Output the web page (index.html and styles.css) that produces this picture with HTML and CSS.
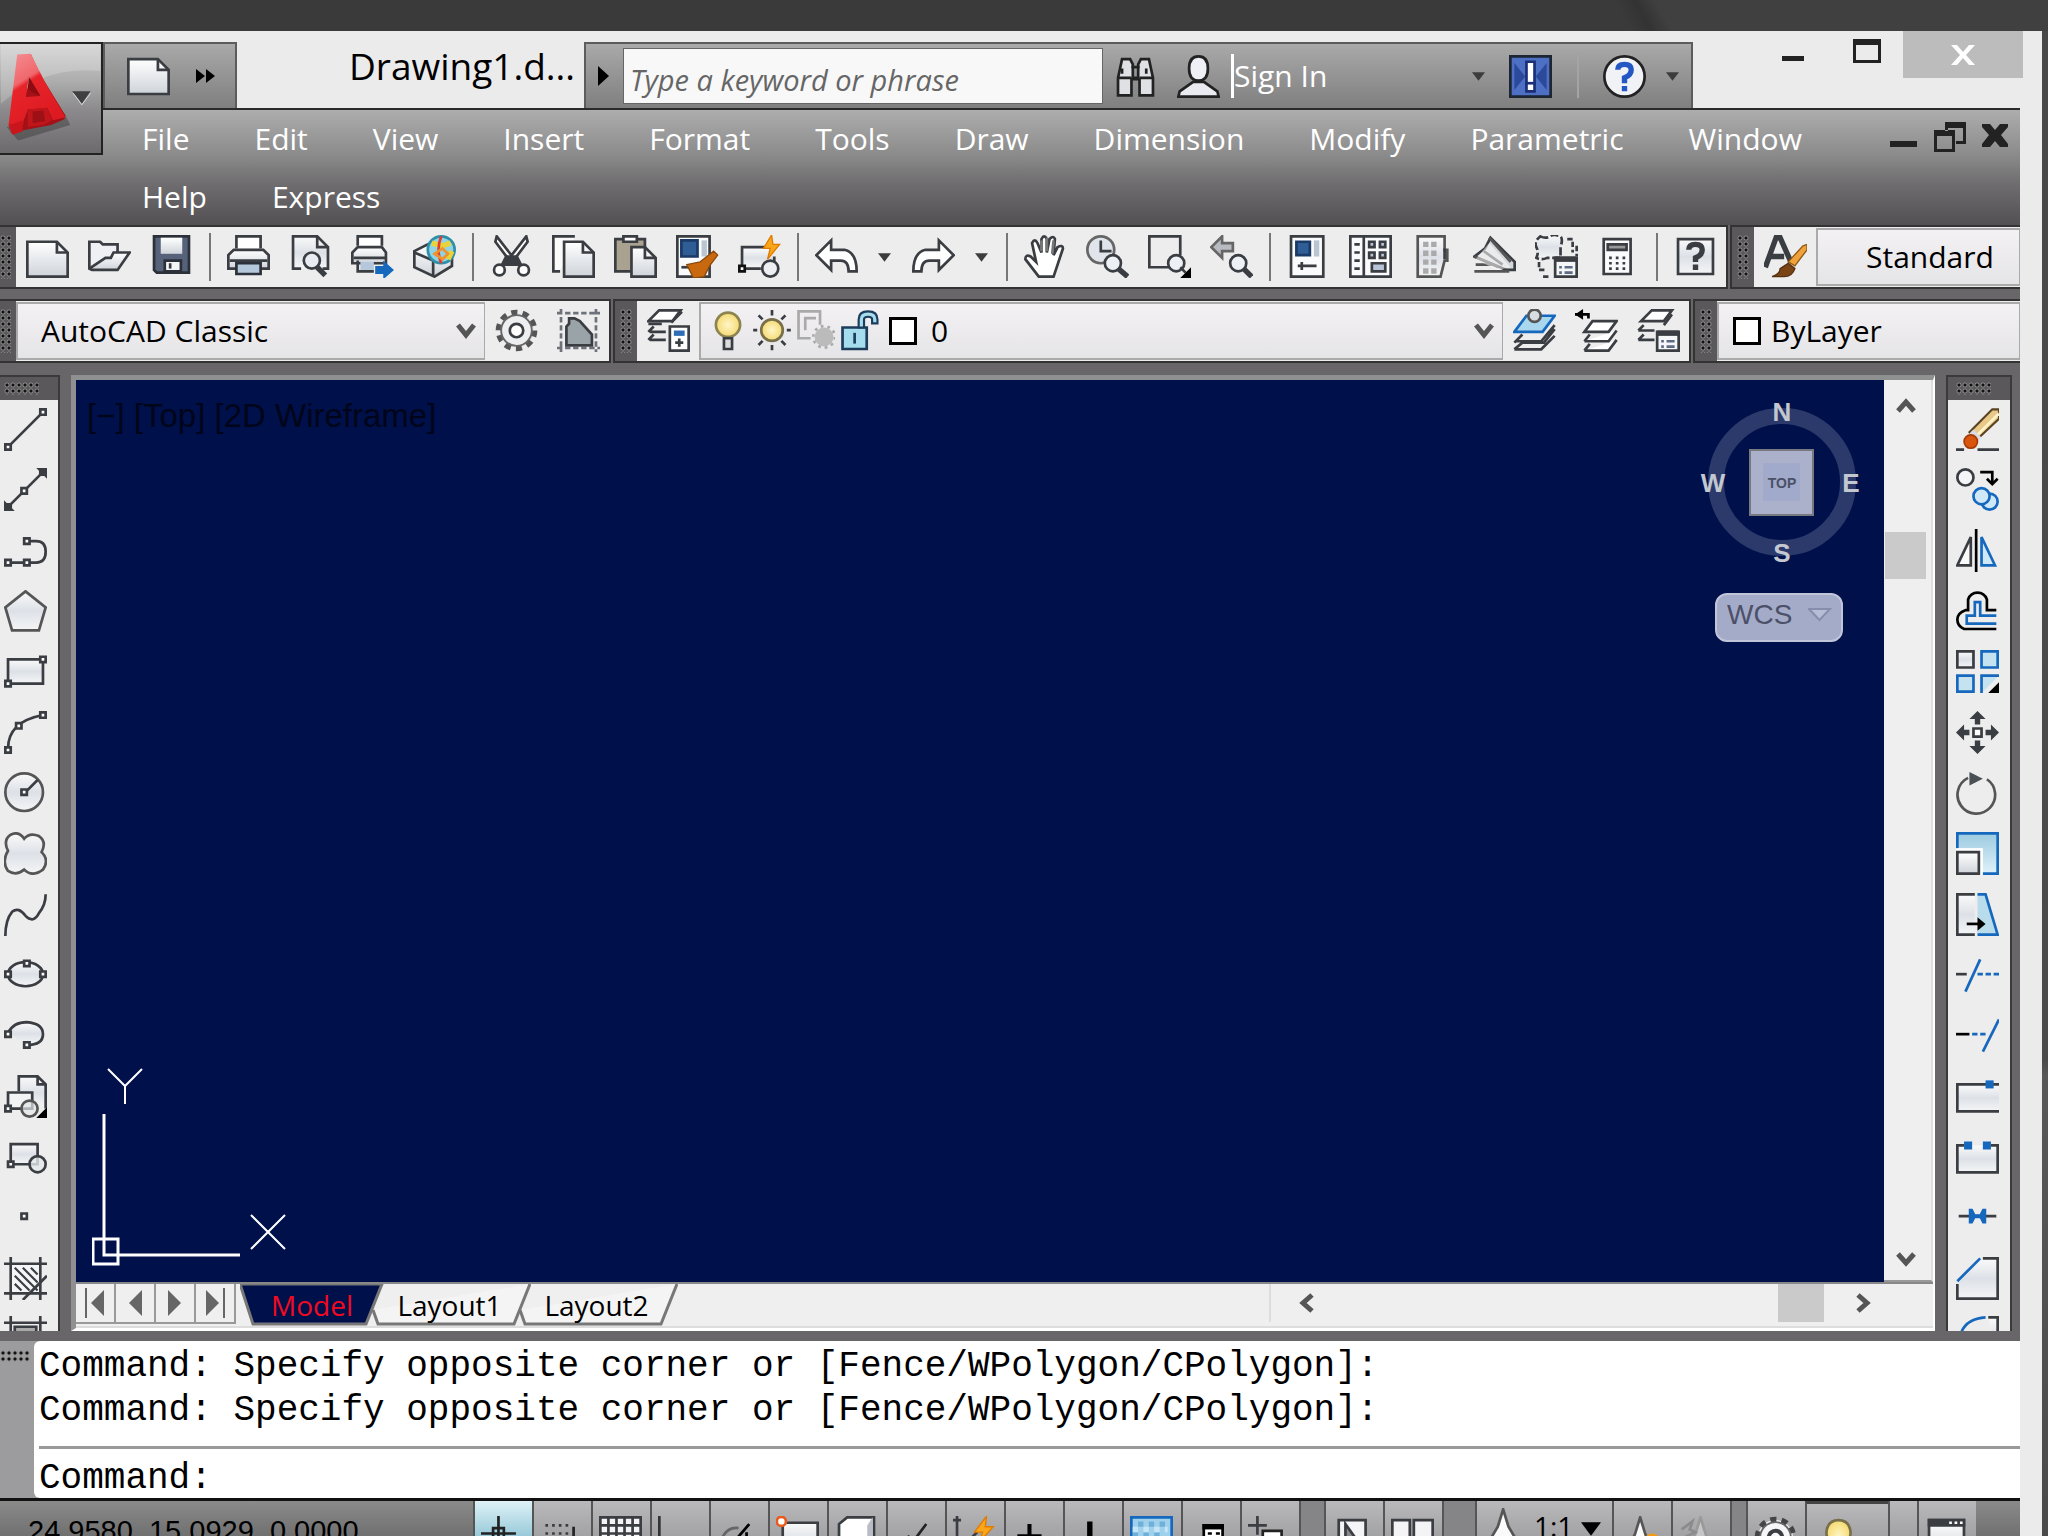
FILE: index.html
```html
<!DOCTYPE html>
<html lang="en">
<head>
  <meta charset="UTF-8">
  <meta name="viewport" content="width=device-width, initial-scale=1.0">
  <title>Drawing1.dwg</title>
  <link rel="stylesheet" href="styles.css">
</head>
<body>

  <!-- Shared gradients -->
  <svg class="defs" aria-hidden="true">
    <defs>
      <linearGradient id="paper" x1="0" y1="0" x2="0" y2="1"><stop offset="0" stop-color="#fff"/><stop offset="1" stop-color="#cfd4da"/></linearGradient>
      <linearGradient id="shade" x1="0" y1="0" x2="0" y2="1"><stop offset="0" stop-color="#fafafa"/><stop offset=".5" stop-color="#dde1e7"/><stop offset="1" stop-color="#f4f5f6"/></linearGradient>
      <linearGradient id="sky" x1="0" y1="0" x2="0" y2="1"><stop offset="0" stop-color="#9ccbe0"/><stop offset="1" stop-color="#dff1fa"/></linearGradient>
      <linearGradient id="red" x1="0" y1="0" x2=".5" y2="1"><stop offset="0" stop-color="#f58f93"/><stop offset=".4" stop-color="#f0686d"/><stop offset=".46" stop-color="#e8242b"/><stop offset="1" stop-color="#dd1a21"/></linearGradient>
      <radialGradient id="bulb"><stop offset="0" stop-color="#fff6c8"/><stop offset="1" stop-color="#f5da72"/></radialGradient>
    </defs>
  </svg>

  <div class="desktop"></div>

  <div class="window">

    <header class="header">
      <button class="logo" aria-label="Application menu">
        <svg viewBox="0 0 103 113">
          <path d="M0 0h103v28Q45 22 0 62z" fill="#fff" opacity=".2"/>
          <path d="M6 86L18 100 72 84 66 72z" fill="#333" opacity=".4"/>
          <path d="M31 10L40 30 67 74 66 78 52 84 10 92 30 40z" fill="#a31016"/>
          <path d="M17 11L31 10 46 40 67 76 54 79 48 66 28 68 22 84 8 84z M29 34L26 55 41 54z" fill="url(#red)" fill-rule="evenodd"/>
          <path d="M29 34L41 54 33 50 28 46z" fill="#8d0c12"/>
          <path d="M28 68L48 66 53 79 44 84 28 86z" fill="#c0151b"/>
          <path d="M33 70L44 69 46 80 33 82z" fill="#9c1016"/>
          <path d="M8 84L24 79 22 91 12 94z" fill="#c9161c"/>
          <path d="M74 49h19l-9 13z" fill="#3f3f42"/>
          <path d="M75 51l9 12 9-12" fill="none" stroke="#ddd"/>
        </svg>
      </button>

      <div class="titlebar">
        <div class="quick">
          <button aria-label="New"><svg class="ic" viewBox="0 0 16 16"><path d="M.5 1.500h11l4 4v9h-15z" fill="url(#paper)"/><path d="M11.500 1.500v4h4"/></svg></button>
          <button aria-label="More"><svg class="more" viewBox="0 0 20 16"><path d="M0 1v14l9-7zM10 1v14l9-7z"/></svg></button>
        </div>
        <h1>Drawing1.d...</h1>
        <div class="info">
          <button class="play" aria-label="Collapse"><svg viewBox="0 0 12 20"><path d="M0 0v20l11-10z"/></svg></button>
          <input class="search" type="search" aria-label="Search" placeholder="Type a keyword or phrase">
          <button aria-label="Find"><svg class="ic" viewBox="0 0 16 16"><path d="M3 1.500h3l1 2v5h2v-5l1-2h3l1.500 7v6.500h-5v-6h-3v6h-5v-6.500z" fill="#dfe1e5" stroke="#222"/><path d="M1.500 8.500h5M9.500 8.500h5M6.500 4.500h3M3 5v2M12 5v2" stroke="#222"/></svg></button>
          <button class="sign" aria-label="Sign In">
            <svg class="ic" viewBox="0 0 16 16"><path d="M8 .5c2.500 0 3.500 2 3.500 4.500s-1 4.500-3.500 4.500-3.500-2-3.500-4.500 1-4.500 3.500-4.500z" fill="#eef0f5" stroke="#222"/><path d="M6 10l-5 3.500-.5 2h15l-.5-2-5-3.500z" fill="#e9ebf0" stroke="#222"/></svg>
            <span>Sign In</span>
            <svg class="tri" viewBox="0 0 12 8"><path d="M0 0h12l-6 8z"/></svg>
          </button>
          <button aria-label="Exchange"><svg class="ic" viewBox="0 0 16 16"><path d="M.5 .5h15v15h-15z" fill="#4d6fc4" stroke="#1d2432"/><path d="M2 3l4 5-4 5M14 3l-4 5 4 5" fill="#2c4a9a" stroke="none"/><path d="M6.500 2.500h3v11h-3z" fill="#fff" stroke="#1b2f78"/><path d="M6 10.500h4" stroke="#1b2f78"/></svg></button>
          <i class="rule"></i>
          <button aria-label="Help"><svg class="ic" viewBox="0 0 16 16"><circle cx="8" cy="8" r="7.500" fill="#f0f2f5" stroke="#222"/><path d="M5.500 5.500q0-2 2.500-2t2.500 2-2.500 3v2M8 11.500v2" stroke="#2456c4" stroke-width="2"/></svg></button>
          <button class="drop" aria-label="Help options"><svg class="tri" viewBox="0 0 12 8"><path d="M0 0h12l-6 8z"/></svg></button>
        </div>
        <div class="winbtns">
          <button aria-label="Minimize"><svg viewBox="0 0 28 24"><path d="M3 17h22v5h-22z"/></svg></button>
          <button aria-label="Maximize"><svg viewBox="0 0 28 24"><path d="M0 0h28v24h-28zM3 6v15h22v-15z" fill-rule="evenodd"/></svg></button>
          <button class="close" aria-label="Close"><svg viewBox="0 0 24 20"><path d="M0 0h6l6 7 6-7h6l-9 10 9 10h-6l-6-7-6 7h-6l9-10z"/></svg></button>
        </div>
      </div>

      <div class="menubar">
        <nav class="menu">
          <button>File</button>
          <button>Edit</button>
          <button>View</button>
          <button>Insert</button>
          <button>Format</button>
          <button>Tools</button>
          <button>Draw</button>
          <button>Dimension</button>
          <button>Modify</button>
          <button>Parametric</button>
          <button>Window</button>
          <button>Help</button>
          <button>Express</button>
        </nav>
        <div class="docbtns">
          <button aria-label="Minimize drawing"><svg viewBox="0 0 28 30"><path d="M0 19h27v6h-27z"/></svg></button>
          <button aria-label="Restore drawing"><svg viewBox="0 0 32 30"><path d="M11 0h21v22h-10v-3h7v-13h-15v3h-3zM0 8h21v22h-21zM3 14v13h15v-13z" fill-rule="evenodd"/></svg></button>
          <button aria-label="Close drawing"><svg viewBox="0 0 26 30"><path d="M0 2h8l5 6 5-6h8v3l-7 8 7 9v3h-8l-5-6-5 6h-8v-3l7-9-7-8z"/></svg></button>
        </div>
      </div>
    </header>

    <main class="main">
      <div class="toolrow">
        <section class="bar">
          <i class="grip"></i>
          <button class="tool" aria-label="New"><svg class="ic" viewBox="0 0 16 16"><path d="M.5 2.500h11l4 4v9h-15z" fill="url(#paper)"/><path d="M11.500 2.500v4h4"/></svg></button>
          <button class="tool" aria-label="Open"><svg class="ic" viewBox="0 0 16 16"><path d="M.5 12.500v-10h4l1 1h5.500v4" fill="#eef0f3"/><path d="M.5 12.500l6-4h2l1-2h6l-4.500 6.500h-9.500z" fill="url(#paper)"/></svg></button>
          <button class="tool" aria-label="Save"><svg class="ic" viewBox="0 0 16 16"><path d="M1.500 .5h13v13.500h-12l-1-1z" fill="#56617a" stroke="#2c3038"/><path d="M4 1h8v6h-8z" fill="url(#paper)" stroke="none"/><path d="M5.500 9.500h6v4h-6z" fill="#f4f5f7" stroke="#2c3038"/><path d="M7.500 10.500v2"/></svg></button>
          <i class="sep"></i>
          <button class="tool" aria-label="Plot"><svg class="ic" viewBox="0 0 16 16"><path d="M3.500 5v-4.500h9v4.500" fill="#fff"/><path d="M.5 12.500v-5l2-2h11l2 2v5z" fill="url(#paper)"/><path d="M1 9.500h14"/><path d="M3.500 10.500h9v4h-9z" fill="#b5c8db" stroke="#2c3038"/></svg></button>
          <button class="tool" aria-label="Preview"><svg class="ic" viewBox="0 0 16 16"><path d="M4.500 12.500h-3v-12h9l4 4v8h-2" fill="url(#shade)"/><path d="M10.500 .5v4h4"/><circle cx="8.500" cy="9.500" r="3" fill="#e8edf3"/><path d="M10.500 12l3 3" stroke-width="2"/></svg></button>
          <button class="tool" aria-label="Publish"><svg class="ic" viewBox="0 0 16 16"><path d="M2.500 4v-3.500h9v3.500" fill="#fff"/><path d="M.5 10.500v-4l2-2h9l1.500 2v4z" fill="url(#paper)"/><path d="M1 8.500h12M2.500 9.500v4h6"/><path d="M3.500 10h5v3h-5z" fill="#b5c8db" stroke="none"/><path d="M9 11.500h3v-2l4 3.500-4 3.500v-2h-3z" fill="#1668bd" stroke="none"/></svg></button>
          <button class="tool" aria-label="3D DWF"><svg class="ic" viewBox="0 0 16 16"><path d="M.5 6l5-2.500h9v8l-6.500 4-7.500-3.500z" fill="url(#paper)"/><path d="M.5 6.500l7 3v6"/><circle cx="10.500" cy="5.500" r="5" fill="#8fd3e6" stroke="#2f8fa8"/><path d="M7 3l4 1 3-1M13 9l1.500-3" stroke="#e9d33c" stroke-width="2"/><path d="M10.500 .5q-2 5 0 10" stroke="#e23c2c"/><path d="M8 7l3-2 2 2-2 2z" stroke="#f0932b"/></svg></button>
          <i class="sep"></i>
          <button class="tool" aria-label="Cut"><svg class="ic" viewBox="0 0 16 16"><path d="M2.500 .5l7 9-1.500 1-6-8zM13.500 .5l-7 9 1.500 1 6-8z" fill="#fff"/><path d="M6 8h4l1.500 3h-7z" fill="#3a3d42"/><circle cx="3.500" cy="13" r="2" fill="#fff"/><circle cx="12.500" cy="13" r="2" fill="#fff"/></svg></button>
          <button class="tool" aria-label="Copy"><svg class="ic" viewBox="0 0 16 16"><path d="M3 13.500h-2.500v-13h8" fill="#fafafa"/><path d="M4.500 2.500h7l4 4v9h-11z" fill="url(#paper)"/><path d="M11.500 2.500v4h4"/></svg></button>
          <button class="tool" aria-label="Paste"><svg class="ic" viewBox="0 0 16 16"><path d="M.5 1.500h11v12h-11z" fill="#aaa291"/><path d="M3.500 2.500v-2h5v2z" fill="#fff"/><path d="M6.500 4.500h5l4 4v7h-9z" fill="url(#paper)"/><path d="M11.500 4.500v4h4"/></svg></button>
          <button class="tool" aria-label="Match properties"><svg class="ic" viewBox="0 0 16 16"><path d="M.5 .5h12v15h-12z" fill="#fafbfc"/><path d="M2 2h6v6h-6z" fill="#2f5d96" stroke="#1b3a66"/><path d="M9.500 2h2v6h-2z" fill="#b9c6d2" stroke="none"/><path d="M2 12h4"/><path d="M4 11l5-1 5-4 1.500 1.500-3 4-2 4-4 .5z" fill="#c8690f" stroke="#8d4a0c" stroke-width=".5"/></svg></button>
          <button class="tool" aria-label="Block editor"><svg class="ic" viewBox="0 0 16 16"><path d="M2 5h11v7h-11z" fill="url(#shade)" stroke="none"/><path d="M1.500 4.500v8h7M1 4.500h9M13.500 8v2"/><path d="M.5 11.500h2v2h-2z" fill="#fff" stroke="#111"/><circle cx="12" cy="12.500" r="3" fill="#eceef1"/><path d="M12.500 0l-3 5h2.500l-1 4 4.500-5.500h-2.500z" fill="#f9a61a" stroke="#e07c00" stroke-width=".5"/></svg></button>
          <i class="sep"></i>
          <button class="tool" aria-label="Undo"><svg class="ic" viewBox="0 0 16 16"><path d="M.5 7.500l5.500-5.500v3.500h5q4.500 1 4.500 8h-3q0-4-3-4h-3.500v3.500z" fill="#fff"/></svg></button>
          <button class="mini" aria-label="Undo list"><svg class="tri" viewBox="0 0 12 8"><path d="M0 0h12l-6 8z"/></svg></button>
          <button class="tool" aria-label="Redo"><svg class="ic" viewBox="0 0 16 16"><path d="M15.500 7.500l-5.500-5.500v3.500h-5q-4.500 1-4.500 8h3q0-4 3-4h3.500v3.500z" fill="#fff"/></svg></button>
          <button class="mini" aria-label="Redo list"><svg class="tri" viewBox="0 0 12 8"><path d="M0 0h12l-6 8z"/></svg></button>
          <i class="sep"></i>
          <button class="tool" aria-label="Pan"><svg class="ic" viewBox="0 0 16 16"><path d="M5.500 15.500l-5-6.500q0-2 2-1l2 2-1.500-7q1-2 2 0l1.500 3.500v-5q1-2 2 0v5l1-5q1.500-1.500 2 0l-.5 6 1.500-3q2-1 2 .5l-2 6-1.500 4.500z" fill="#fff"/><path d="M6.500 6v-4M8.500 6v-5M10.500 7l.5-5" stroke="#777"/></svg></button>
          <button class="tool" aria-label="Zoom realtime"><svg class="ic" viewBox="0 0 16 16"><circle cx="5.500" cy="5.500" r="5" fill="#dfe5eb" stroke="#666"/><path d="M5.500 2v4h4"/><circle cx="10" cy="10.500" r="3" fill="#eef1f4"/><path d="M12 12.500l3.500 3" stroke-width="2"/></svg></button>
          <button class="tool" aria-label="Zoom window"><svg class="ic" viewBox="0 0 16 16"><path d="M8 12h-7.500v-11.500h11.500v7"/><circle cx="10.500" cy="10.500" r="3" fill="#eef1f4"/><path d="M12 12l2 2"/><path d="M16 12v4h-4z" fill="#000" stroke="none"/></svg></button>
          <button class="tool" aria-label="Zoom previous"><svg class="ic" viewBox="0 0 16 16"><path d="M.5 4.500l4-4v2.500h4v3h-4v2.500z" fill="#b8bcc2" stroke="#666"/><circle cx="10.500" cy="10.500" r="3" fill="#eef1f4"/><path d="M12.500 12.500l3 3" stroke-width="2"/></svg></button>
          <i class="sep"></i>
          <button class="tool" aria-label="Properties"><svg class="ic" viewBox="0 0 16 16"><path d="M1.500 .5h12v15h-12z" fill="#fafbfc"/><path d="M3.500 2.500h5v5h-5z" fill="#2f5d96" stroke="#1b3a66"/><path d="M10 2h2v6h-2z" fill="#b9c6d2" stroke="none"/><path d="M4 11.500h7M5.500 10v3"/></svg></button>
          <button class="tool" aria-label="DesignCenter"><svg class="ic" viewBox="0 0 16 16"><path d="M.5 .5h15v15h-15zM5.500 1v14" fill="#fafbfc"/><path d="M2 3.500h2M2 6.500h2M2 9.500h2M2 12.500h2"/><path d="M7.500 2.500h2v2h-2zM11.500 2.500h2v2h-2zM7.500 6.500h2v2h-2zM11.500 6.500h2v2h-2zM8.500 10.500h5v3h-5z" fill="#b9c3d8"/></svg></button>
          <button class="tool" aria-label="Tool palettes"><svg class="ic" viewBox="0 0 16 16"><path d="M2.500 .5h10v5h1v4h-1l-1.500 6h-8.500z" fill="url(#shade)" stroke="#555"/><path d="M12.500 5v4"/><path d="M5.500 2.500v13M8.500 2.500v13" stroke="#aaa" stroke-width="2" stroke-dasharray="2 1.300"/></svg></button>
          <button class="tool" aria-label="Sheet sets"><svg class="ic" viewBox="0 0 16 16"><path d="M.5 8l4-3 2-4 9 9v3h-3z" fill="#d4d7db"/><path d="M6 1l8 9M.5 8l9 4M1 11h7M.5 13.500h13M4 6l7 5" stroke="#555"/><path d="M1 9l8 4 5-1-8-9z" fill="#fff" opacity=".5" stroke="none"/></svg></button>
          <button class="tool" aria-label="Markup"><svg class="ic" viewBox="0 0 16 16"><path d="M2 .5q2 1 3.500 0t4 0q1 1 0 4v4h-5q-2 1-4 0 1-2 0-4t1.500-4z" fill="url(#shade)" stroke-dasharray="3 1"/><path d="M12 1.500h2v5M15.500 4v4M1.500 10v3h3M3 15.500h2" stroke-dasharray="2 1"/><path d="M7.500 8.500h8v7h-8z" fill="#f4f6f8"/><path d="M7.500 9h8" stroke-width="2"/><path d="M9 12h1M11 12h3M9 14h1M11 14h3" stroke="#5d6b85"/></svg></button>
          <button class="tool" aria-label="QuickCalc"><svg class="ic" viewBox="0 0 16 16"><path d="M2.500 1.500h10v13h-10z" fill="#fafbfc"/><path d="M4 3.500h7v2h-7z" fill="#999"/><path d="M5 8v6M7.500 8v6M10 8v6" stroke-dasharray="1 1"/></svg></button>
          <i class="sep"></i>
          <button class="tool" aria-label="Help"><svg class="ic" viewBox="0 0 16 16"><path d="M1.500 1.500h13v13h-13z" fill="url(#shade)"/><path d="M5.500 5.500q0-2 2.500-2t2.500 2-2.500 3v1.500M8 11v2" stroke-width="2"/></svg></button>
        </section>
        <section class="bar grow">
          <i class="grip"></i>
          <button class="tool" aria-label="Text style"><svg class="ic" viewBox="0 0 16 16"><path d="M.5 12l4-11h1.500l4 9M2.500 8h5" stroke-width="2"/><path d="M9 10l5.500-6 1.500-.5v2l-4.500 6z" fill="#f0a13c" stroke="#8d5a14" stroke-width=".5"/><path d="M3 15.500q3-1 3-3l3-2 2.500 2q-1 3-4 3z" fill="#7a4415" stroke="#54300f" stroke-width=".5"/></svg></button>
          <label class="combo grow indent"><select aria-label="Text style name"><option>Standard</option></select></label>
        </section>
      </div>

      <div class="toolrow">
        <section class="bar">
          <i class="grip"></i>
          <label class="combo workspace"><select aria-label="Workspace"><option>AutoCAD Classic</option></select><svg class="chev" viewBox="0 0 20 16"><path d="M2 2l8 10 8-10"/></svg></label>
          <button class="tool" aria-label="Workspace settings"><svg class="ic" viewBox="0 0 16 16"><circle cx="8" cy="8" r="6.500" fill="#e6e8eb" stroke="#555" stroke-width="2.500" stroke-dasharray="2.200 1.880"/><circle cx="8" cy="8" r="5.700" fill="#eceef0" stroke="#666" stroke-width=".7"/><circle cx="8" cy="8" r="2.500" fill="#fff"/></svg></button>
          <button class="tool" aria-label="My workspace"><svg class="ic" viewBox="0 0 16 16"><path d="M0 1.500h16M1.500 0v16M14.500 0v16M0 14.500h16" stroke="#6d7179" stroke-dasharray="2 1"/><path d="M3.500 13.500v-7l1-1v-2h2l2 1 4.500 5v4z" fill="#9aa3a8"/></svg></button>
        </section>
        <section class="bar grow">
          <i class="grip"></i>
          <button class="tool" aria-label="Layer properties"><svg class="ic" viewBox="0 0 16 16"><path d="M.5 4.500l4-4h8l-3 4z" fill="#fff"/><path d="M.5 5.500h5M1 8.500h6M.5 8.500l2-2M1 11.500h6M.5 11.500l2-2M13 1l-4 4"/><path d="M8.500 6.500h7v9h-7z" fill="#fff"/><path d="M10 8h4v2h-4z" fill="#2f6db6" stroke="none"/><path d="M10.500 12.500h3M12 11v3"/></svg></button>
          <label class="combo grow layer">
            <svg class="ic sm" viewBox="0 0 14 16"><circle cx="7" cy="5.500" r="4.500" fill="url(#bulb)" stroke="#8c8450"/><path d="M5.500 10.500h3v4h-3z" fill="#ddd"/></svg>
            <svg class="ic sm" viewBox="0 0 14 16"><circle cx="7" cy="7.500" r="4" fill="url(#bulb)" stroke="#77704a"/><path d="M7 0v2M7 13v2M0 7.500h1.500M12.500 7.500h1.500M2 2l1.500 1.500M12 2l-1.500 1.500M2 13l1.500-1.500M12 13l-1.500-1.500"/></svg>
            <svg class="ic sm" viewBox="0 0 14 16"><path d="M5 10.500h-4.500v-10h8v5M3 7.500v-4.500h4" stroke="#aaa"/><circle cx="10" cy="10" r="3" fill="#bbb" stroke="#bbb"/><circle cx="10" cy="10" r="4" stroke="#aaa" stroke-dasharray="1 1.500"/></svg>
            <svg class="ic sm" viewBox="0 0 14 16"><path d="M.5 6.500h9v8h-9z" fill="#a5dcee" stroke="#1d3c5c"/><path d="M5 8.500v4" stroke="#1d3c5c"/><path d="M6.500 6.500v-3q0-3 3.500-3t3.500 3v1.500h-2v-1.500q0-1-1.500-1t-1.500 1v3z" fill="#a5dcee" stroke="#1d3c5c" stroke-width=".8"/></svg>
            <i class="swatch"></i>
            <select aria-label="Layer"><option>0</option></select>
            <svg class="chev" viewBox="0 0 20 16"><path d="M2 2l8 10 8-10"/></svg>
          </label>
          <button class="tool" aria-label="Make current"><svg class="ic" viewBox="0 0 16 16"><path d="M.5 15l3-2.500h8l4-5M.5 12.500l3-3M1 12h9.500l5-6M.5 15h10l5-5"/><path d="M.5 8.500l4.500-6h10.500l-4.500 6z" fill="#a9d7ee" stroke="#1668bd"/><circle cx="8" cy="2.500" r="2.300" fill="#d8dde2" stroke="#555"/></svg></button>
          <button class="tool" aria-label="Layer previous"><svg class="ic" viewBox="0 0 16 16"><path d="M3.500 8.500l3-4h9l-3 4zM3.500 12l2-2.500M3.500 12h9l3-4M3.500 15.500l2-2.500M3.500 15.500h9l3-4" fill="#fff"/><path d="M0 2h5v1.500" stroke="#000"/><path d="M3 0v4l-3-2z" fill="#000" stroke="none"/></svg></button>
          <button class="tool" aria-label="Layer states"><svg class="ic" viewBox="0 0 16 16"><path d="M1.500 4.500l4-4h7.500l-3 4z" fill="#fff"/><path d="M.5 8l2-2M.5 8h6M.5 11.500l2-2M.5 11.500h6M13 2l-3 4"/><path d="M7.500 8.500h8v7h-8z" fill="#f4f6f8"/><path d="M7.500 9h8" stroke-width="2"/><path d="M9 12h1M11 12h3M9 14h1M11 14h3" stroke="#5d6b85"/></svg></button>
        </section>
        <section class="bar props">
          <i class="grip"></i>
          <label class="combo grow color"><i class="swatch"></i><select aria-label="Color"><option>ByLayer</option></select></label>
        </section>
      </div>

      <div class="workarea">
        <aside class="side">
          <i class="grip flat"></i>
          <div class="tools">
            <button aria-label="Line"><svg class="ic" viewBox="0 0 16 16"><path d="M2 14l12-12"/><path d="M.5 13.500h2v2h-2zM13.500 .5h2v2h-2z" fill="#fff"/></svg></button>
            <button aria-label="Construction line"><svg class="ic" viewBox="0 0 16 16"><path d="M2 14l12-12"/><path d="M6.500 7.500h2v2h-2z" fill="#fff"/><path d="M12 0h4v4l-1-1h-2v-2zM0 16h4l-1-1v-2h-2l-1-1z" fill="#3a3d42" stroke="none"/></svg></button>
            <button aria-label="Polyline"><svg class="ic" viewBox="0 0 16 16"><path d="M2 12.500h10q3.500 0 3.500-4t-3.500-4h-3"/><path d="M.5 11.500h2v2h-2zM7.500 11.500h2v2h-2zM7.500 3.500h2v2h-2z" fill="#fff"/></svg></button>
            <button aria-label="Polygon"><svg class="ic" viewBox="0 0 16 16"><path d="M8 .5l7.500 6-2.500 8.500h-10l-2.500-8.500z" fill="url(#shade)" stroke="#555"/></svg></button>
            <button aria-label="Rectangle"><svg class="ic" viewBox="0 0 16 16"><path d="M1.500 3.500h13v9h-13z" fill="url(#shade)"/><path d="M.5 11.500h2v2h-2zM13.500 2.500h2v2h-2z" fill="#fff"/></svg></button>
            <button aria-label="Arc"><svg class="ic" viewBox="0 0 16 16"><path d="M1.500 14q0-10 13-12.500"/><path d="M.5 13.500h2v2h-2zM4.500 4.500h2v2h-2zM13.500 .5h2v2h-2z" fill="#fff"/></svg></button>
            <button aria-label="Circle"><svg class="ic" viewBox="0 0 16 16"><circle cx="7.500" cy="7.500" r="7" fill="url(#shade)" stroke="#555"/><path d="M8 7.500l4.500-4.500"/><path d="M6.500 6.500h2v2h-2z" fill="#fff"/></svg></button>
            <button aria-label="Revision cloud"><svg class="ic" viewBox="0 0 16 16"><path d="M1.500 7q-2-4 1-6 3-1.500 5 1.500 2-2.500 5.500-1 3 2 1 6 3 3 .5 6.500-4 3-7 0-3 2.500-6 .5-2.500-3.500 0-7.500z" fill="url(#shade)" stroke="#555"/></svg></button>
            <button aria-label="Spline"><svg class="ic" viewBox="0 0 16 16"><path d="M.5 16q0-6 2.500-9 2.500-2 5 1.500 3 3 5-1 2.500-3 2.500-7"/></svg></button>
            <button aria-label="Ellipse"><svg class="ic" viewBox="0 0 16 16"><ellipse cx="8" cy="7.500" rx="6.500" ry="4.500" fill="url(#shade)"/><path d="M.5 6.500h2v2h-2zM13.500 6.500h2v2h-2zM7.500 2.500h2v2h-2z" fill="#fff"/></svg></button>
            <button aria-label="Ellipse arc"><svg class="ic" viewBox="0 0 16 16"><path d="M1.500 7q2-4 7-4 6 .5 6 4.500t-6 4" fill="url(#shade)"/><path d="M.5 6.500h2v2h-2zM7.500 10.500h2v2h-2z" fill="#fff"/></svg></button>
            <button aria-label="Insert block"><svg class="ic" viewBox="0 0 16 16"><path d="M5.500 6v-5.500h7l3 3v9" fill="url(#shade)"/><path d="M12.500 .5v3h3"/><path d="M1.500 6.500h9v6h-9z" fill="#f2f3f5"/><circle cx="9.500" cy="12.500" r="3" fill="#e4e7ea" fill-opacity=".7" stroke="#555"/><path d="M.5 11.500h2v2h-2z" fill="#fff"/><path d="M16 12v4h-4z" fill="#000" stroke="none"/></svg></button>
            <button aria-label="Make block"><svg class="ic" viewBox="0 0 16 16"><path d="M2.500 3h10v7.500h-10z" fill="url(#shade)"/><circle cx="12.500" cy="10.500" r="3" fill="#e4e7ea" fill-opacity=".8"/><path d="M1.500 9.500h2v2h-2z" fill="#fff"/></svg></button>
            <button aria-label="Point"><svg class="ic" viewBox="0 0 16 16"><path d="M6.500 6.500h2v2h-2z" fill="#fff"/></svg></button>
            <button aria-label="Hatch"><svg class="ic" viewBox="0 0 16 16"><path d="M0 2.500h16M0 13.500h16M2.500 0v16M13.500 0v16"/><path d="M3 3h10v10h-10z" fill="#f4f5f6" stroke="none"/><path d="M4 10l2.500 2.500M4 7l5.500 5.500M4 4l8.500 8.500M7 4l5.500 5.500M10 4l2.500 2.500" stroke-width=".8"/><path d="M7 16l9-9"/></svg></button>
            <button class="cut" aria-label="Gradient"><svg class="ic" viewBox="0 0 16 16"><path d="M0 2.500h16M2.500 0v16M13.500 0v16"/><path d="M4 4h8v8h-8z" fill="#aaa"/></svg></button>
          </div>
        </aside>

        <div class="frame">
          <div class="view">
            <p class="viewlabel">[−] [Top] [2D Wireframe]</p>
            <svg class="cube" viewBox="0 0 170 170">
              <circle cx="85" cy="85" r="66" fill="none" stroke="#2b396b" stroke-width="16"/>
              <path d="M53 53h63v65h-63z" fill="#abb1cb" stroke="#77797f" stroke-width="2"/>
              <path d="M66 66h37v38h-37z" fill="#a2aacb"/>
              <text x="85" y="91" class="top">TOP</text>
              <text x="85" y="24">N</text>
              <text x="85" y="165">S</text>
              <text x="16" y="95">W</text>
              <text x="154" y="95">E</text>
            </svg>
            <button class="wcs">WCS <svg viewBox="0 0 24 14"><path d="M1 1h21l-10.500 11z"/></svg></button>
            <svg class="ucs" viewBox="0 0 200 204">
              <path d="M12 50v141h136M1 175h25v25h-25z"/>
              <path d="M16 5l17 17 17-17M33 22v18M159 151l34 34M193 151l-34 34" stroke-width="2"/>
            </svg>
          </div>
          <div class="vscroll">
            <svg class="chev" viewBox="0 0 20 16"><path d="M2 14l8-9 8 9"/></svg>
            <i class="thumb"></i>
            <svg class="chev" viewBox="0 0 20 16"><path d="M2 2l8 9 8-9"/></svg>
          </div>
          <div class="tabs">
            <button class="nav" aria-label="First"><svg viewBox="0 0 20 30"><path d="M1 0v30" stroke="#666" stroke-width="2"/><path d="M19 2v26l-13-13z"/></svg></button>
            <button class="nav" aria-label="Previous"><svg viewBox="0 0 20 30"><path d="M17 2v26l-13-13z"/></svg></button>
            <button class="nav" aria-label="Next"><svg viewBox="0 0 20 30"><path d="M3 2v26l13-13z"/></svg></button>
            <button class="nav" aria-label="Last"><svg viewBox="0 0 20 30"><path d="M1 2v26l13-13z"/><path d="M19 0v30" stroke="#666" stroke-width="2"/></svg></button>
            <button class="tab model"><svg viewBox="0 0 144 42" preserveAspectRatio="none"><path d="M0 0l13 40h113l16-40z"/></svg><span>Model</span></button>
            <button class="tab"><svg viewBox="0 0 163 42" preserveAspectRatio="none"><path d="M5 26l5 14h136l16-40"/></svg><span>Layout1</span></button>
            <button class="tab"><svg viewBox="0 0 163 42" preserveAspectRatio="none"><path d="M5 26l5 14h136l16-40"/></svg><span>Layout2</span></button>
            <div class="hscroll">
              <svg viewBox="0 0 16 20"><path d="M14 2l-9 8 9 8"/></svg>
              <i class="thumb"></i>
              <svg viewBox="0 0 16 20"><path d="M2 2l9 8-9 8"/></svg>
            </div>
          </div>
        </div>

        <aside class="side right">
          <i class="grip flat"></i>
          <div class="tools">
            <button aria-label="Erase"><svg class="ic" viewBox="0 0 16 16"><path d="M5 9l8.500-8.500h2.500v3.500l-8.500 8z" fill="#e8c98a" stroke="#5a4320" stroke-width=".8"/><path d="M7 11l9-9" stroke="#fff3c8"/><path d="M5 9.500l1.500-1.500 3 3-1.500 1.500z" fill="#d9dde2" stroke="none"/><circle cx="5.500" cy="12.500" r="2.500" fill="#d9560f" stroke="#a33b06" stroke-width=".6"/><path d="M0 15.500h3M8 15.500h8"/></svg></button>
            <button aria-label="Copy object"><svg class="ic" viewBox="0 0 16 16"><circle cx="3.500" cy="3.500" r="3" fill="#f4f5f6"/><path d="M9 1.500h4.500v4M11.500 4l2 2 2-2" stroke="#000"/><g fill="#cfe8f7" stroke="#1668bd"><circle cx="12.500" cy="12.500" r="3"/><circle cx="9.500" cy="10.500" r="3"/></g></svg></button>
            <button aria-label="Mirror"><svg class="ic" viewBox="0 0 16 16"><path d="M5.500 3v10.500h-5z" fill="#fafafa"/><path d="M7.500 0v16" stroke="#000"/><path d="M9.500 3v10.500h5z" fill="#cfe8f7" stroke="#1668bd"/></svg></button>
            <button aria-label="Offset"><svg class="ic" viewBox="0 0 16 16"><path d="M15 14.500h-12q-2.500-1-2.500-3.500t3-3.500h1v-4q1-2.500 3.500-2.500t3.500 2.500v4h3.500" stroke="#000"/><path d="M15 12.500h-11v-3h3v-5h2v5h6" stroke="#1668bd"/></svg></button>
            <button aria-label="Array"><svg class="ic" viewBox="0 0 16 16"><path d="M.5 .5h6v6h-6z" fill="url(#shade)"/><path d="M9.500 .5h6v6h-6zM.5 9.500h6v6h-6zM9.500 16v-6.500h6.500" fill="#c5e2f0" stroke="#1668bd"/><path d="M16 10v6h-6z" fill="#eee" stroke="none"/><path d="M16 12v4h-4z" fill="#000" stroke="none"/></svg></button>
            <button aria-label="Move"><svg class="ic" viewBox="0 0 16 16"><path d="M6.500 6.500h3v3h-3z" fill="#fff"/><path d="M8 0l3 3h-2v2h-2v-2h-2zM8 16l3-3h-2v-2h-2v2h-2zM0 8l3-3v2h2v2h-2v2zM16 8l-3-3v2h-2v2h2v2z" fill="#3a3d42" stroke="none"/></svg></button>
            <button aria-label="Rotate"><svg class="ic" viewBox="0 0 16 16"><path d="M5 2q-4.500 2-4.500 6.500t7 7q7-2 7-7.500 0-3.500-3-5.500" stroke="none"/><path d="M4.500 2.200a7 7 0 1 0 7 .5" stroke="#555"/><path d="M5 0v5l5-2.500z" fill="#4a5054" stroke="none"/></svg></button>
            <button aria-label="Scale"><svg class="ic" viewBox="0 0 16 16"><path d="M.5 .5h15v15h-15z" fill="url(#sky)" stroke="#1668bd"/><path d="M0 6h10v10h-10z" fill="#fff" stroke="none"/><path d="M.5 7.500h8v8h-8z" fill="url(#paper)"/></svg></button>
            <button aria-label="Stretch"><svg class="ic" viewBox="0 0 16 16"><path d="M7 .5h-6.500v15h6.500" fill="url(#shade)"/><path d="M8 .5h3l4.500 15h-7.500" fill="#b9dcec" stroke="#1668bd"/><path d="M4 11.500h5" stroke="#000"/><path d="M8 9l3 2.500-3 2.500z" fill="#000" stroke="none"/></svg></button>
            <button aria-label="Trim"><svg class="ic" viewBox="0 0 16 16"><path d="M0 7.500h4"/><path d="M3.500 14l5.500-12M8 7.500h2M11 7.500h2M14 7.500h2" stroke="#1668bd"/></svg></button>
            <button aria-label="Extend"><svg class="ic" viewBox="0 0 16 16"><path d="M0 7.500h5" stroke="#000"/><path d="M10 14l6-12M6 7.500h2M9 7.500h2" stroke="#1668bd"/></svg></button>
            <button aria-label="Break at point"><svg class="ic" viewBox="0 0 16 16"><path d="M16 3.500h-15.500v10h15.500" fill="url(#shade)"/><path d="M11 2h3v3h-3z" fill="#1668bd" stroke="none"/></svg></button>
            <button aria-label="Break"><svg class="ic" viewBox="0 0 16 16"><path d="M3 3.500h-2.500v10h15v-10h-2.500" fill="url(#shade)"/><path d="M3 2h3v3h-3zM10 2h3v3h-3z" fill="#1668bd" stroke="none"/></svg></button>
            <button aria-label="Join"><svg class="ic" viewBox="0 0 16 16"><path d="M1 7.500h4M11 7.500h4"/><path d="M5 5h1l1 2h2l1-2h1v5h-1l-1-2h-2l-1 2h-1z" fill="#1668bd" stroke="#1668bd" stroke-width=".5"/></svg></button>
            <button aria-label="Chamfer"><svg class="ic" viewBox="0 0 16 16"><path d="M.5 10v5.500h15v-15h-5.500" fill="url(#shade)"/><path d="M.5 9l8.500-8.500" stroke="#1668bd"/></svg></button>
            <button class="cut" aria-label="Fillet"><svg class="ic" viewBox="0 0 16 16"><path d="M12 .5h3.500v15" fill="url(#shade)"/><path d="M2 6q2-5 9-5.500" stroke="#1668bd"/></svg></button>
          </div>
        </aside>
      </div>

      <section class="command">
        <i class="grip flat"></i>
        <div class="console">
          <p>Command: Specify opposite corner or [Fence/WPolygon/CPolygon]:</p>
          <p>Command: Specify opposite corner or [Fence/WPolygon/CPolygon]:</p>
          <div class="prompt"><label for="cmd">Command:</label><input id="cmd" type="text"></div>
        </div>
      </section>

      <footer class="status">
        <span class="coords">24.9580, 15.0929, 0.0000</span>
        <button class="on" aria-label="Infer constraints"><svg class="ic" viewBox="0 0 16 16"><path d="M0 6.500h13M6.500 0v13M4.500 4.500h4v4h-4z" stroke="#222"/><path d="M13 8.500h2v4h-2z" fill="#fff" stroke="#e2601a"/></svg></button>
        <button aria-label="Snap"><svg class="ic" viewBox="0 0 16 16"><path d="M2 3.500h10M2 6.500h10M2 9.500h10" stroke-dasharray="1 1.500"/><path d="M12.500 4v9" stroke="#222"/></svg></button>
        <button aria-label="Grid"><svg class="ic" viewBox="0 0 16 16"><path d="M.5 .5h15v15h-15z" fill="#f4f4f6"/><path d="M3.500 0v16M6.500 0v16M9.500 0v16M12.500 0v16M0 3.500h16M0 6.500h16M0 9.500h16"/></svg></button>
        <button aria-label="Ortho"><svg class="ic" viewBox="0 0 16 16"><path d="M.5 0v16" stroke="#333"/><path d="M1 9.500h5v6" stroke="#777"/></svg></button>
        <button aria-label="Polar"><svg class="ic" viewBox="0 0 16 16"><path d="M2 12v-4q2-4 6-3.500" stroke="#666"/><path d="M12 3l-6 7M5 9.500h8M11 6v4" stroke="#000"/></svg></button>
        <button aria-label="Object snap"><svg class="ic" viewBox="0 0 16 16"><path d="M2.500 2.500h13v13h-13z" fill="url(#shade)"/><circle cx="2" cy="2" r="1.700" fill="#fff" stroke="#ea5a1c"/></svg></button>
        <button aria-label="3D object snap"><svg class="ic" viewBox="0 0 16 16"><path d="M1.500 16v-13l3-2.500h10v12l-2 3z" fill="#fff"/><path d="M12 16v-12.500l2-3v12z" fill="#b9bcc4" stroke="none"/></svg></button>
        <button aria-label="Object tracking"><svg class="ic" viewBox="0 0 16 16"><path d="M12 3l-9 12M5 7.500l4 2" stroke="#222"/></svg></button>
        <button aria-label="Dynamic UCS"><svg class="ic" viewBox="0 0 16 16"><path d="M1.500 0v16M0 1.500h3M3 12l6-6"/><path d="M12.500 0l-4.500 6h3l-1 3.500 5-5.500h-3z" fill="#f9a61a" stroke="#e07c00" stroke-width=".5"/></svg></button>
        <button aria-label="Dynamic input"><svg class="ic" viewBox="0 0 16 16"><path d="M2 7.500h9M6.500 3v8" stroke="#000" stroke-width="1.500"/><path d="M8.500 9.500h6v3h-6z" fill="#fff" stroke="#000"/></svg></button>
        <button aria-label="Lineweight"><svg class="ic" viewBox="0 0 16 16"><path d="M2 8.500h5v-6.500" stroke="#000" stroke-width="2"/><path d="M7 8.500h7M7.500 9v4" stroke="#000"/></svg></button>
        <button aria-label="Transparency"><svg class="ic" viewBox="0 0 16 16"><path d="M.5 .5h15v15h-15z" fill="#9fd0ec" stroke="#1668bd"/><path d="M3 3h12M1 7h12M3 11h12" stroke="#6fb0d8" stroke-width="2" stroke-dasharray="2 2"/><path d="M1 5h13M3 9h12" stroke="#c6e6f5" stroke-width="2" stroke-dasharray="2 2"/></svg></button>
        <button aria-label="Quick properties"><svg class="ic" viewBox="0 0 16 16"><path d="M5.500 3.500h7v12h-7z" fill="#fff" stroke="#000"/><path d="M5 4h8" stroke="#000" stroke-width="2"/><path d="M7 6.500h1.500M10 6.500h1.500M7 8.500h1.500M10 8.500h1.500" stroke="#000"/></svg></button>
        <button aria-label="Selection cycling"><svg class="ic" viewBox="0 0 16 16"><path d="M3.500 0v7M0 3.500h7"/><path d="M5.500 5.500h7v10h-7z" fill="#fff" stroke="#222"/><path d="M8.500 8.500h7v4h-7z" fill="#9fdc84" stroke="#1d7a1d"/></svg></button>
        <i class="gap"></i>
        <button aria-label="Model space"><svg class="ic" viewBox="0 0 16 16"><path d="M2.500 1.500h10v14h-10z" fill="#f4f4f6"/><path d="M5 3v9l2-2h3z" fill="#888"/></svg></button>
        <button aria-label="Quick view"><svg class="ic" viewBox="0 0 16 16"><path d="M.5 1.500h6.500v7h-6.500zM8.500 1.500h7v7h-7z" fill="#f4f4f6"/></svg></button>
        <i class="gap"></i>
        <button class="scale"><svg class="ic" viewBox="0 0 16 16"><path d="M7.500 .5l2 6.500 3 5v3.500h-10v-3.500l3-5z" fill="#fafafa" stroke="#555"/></svg>1:1<svg class="tri big" viewBox="0 0 12 8"><path d="M0 0h12l-6 8z"/></svg></button>
        <button aria-label="Annotation visibility"><svg class="ic" viewBox="0 0 16 16"><path d="M7.500 .5l2 6.500 3 5v3.500h-10v-3.500l3-5z" fill="#fafafa" stroke="#555"/><circle cx="12" cy="9.500" r="2.500" fill="#ffe46a" stroke="#f39a16"/></svg></button>
        <button aria-label="Annotation autoscale"><svg class="ic" viewBox="0 0 16 16"><path d="M8 .5l2 6.500 3 5v3.500h-10v-3.500l3-5z" fill="#c6c6c8" stroke="#999"/><path d="M1 5l4-3-1 3 2 1-4 2" stroke="#8b8b8b"/></svg></button>
        <i class="gap thin"></i>
        <button aria-label="Workspace switching"><svg class="ic" viewBox="0 0 16 16"><circle cx="8" cy="8" r="6.500" fill="#f1f1f3" stroke="#444" stroke-width="2.500" stroke-dasharray="2.200 1.880"/><circle cx="8" cy="8" r="5.700" fill="#f6f6f8" stroke="#666" stroke-width=".7"/><circle cx="8" cy="8" r="2.500" stroke-width="1.500"/></svg></button>
        <button class="lamp" aria-label="Isolate objects"><svg class="ic" viewBox="0 0 16 16"><path d="M8 1.500q4 0 4.500 4.500 0 3-2.500 5v3h-4v-3q-2.500-2-2.500-5 .5-4.500 4.500-4.500z" fill="url(#bulb)" stroke="#77704a"/></svg></button>
        <button class="slim" aria-label="Status menu"><svg class="ic" viewBox="0 0 16 16"><path d="M3 10h10l-5 5z" fill="#000" stroke="none"/></svg></button>
        <button aria-label="Clean screen"><svg class="ic" viewBox="0 0 16 16"><path d="M1.500 1.500h13v13h-13z" fill="url(#paper)"/><path d="M1 2.500h14" stroke-width="3"/><path d="M9 2.500h1M11 2.500h1M13 2.500h1" stroke="#fff"/></svg></button>
      </footer>
    </main>
  </div>

</body>
</html>
```
FILE: styles.css
```css
* {
  margin: 0;
  padding: 0;
  box-sizing: border-box;
}

body {
  height: 100vh;
  display: flex;
  flex-direction: column;
  overflow: hidden;
  background: linear-gradient(#474747, #4b4b4b 69%, #585858 70%, #4a4a4a);
  font-family: "Open Sans", "Noto Sans", sans-serif;
  font-size: 30px;
  color: #000;
}

button, select, input {
  font: inherit;
  color: inherit;
  border: none;
  background: none;
  outline: none;
}

svg {
  display: block;
}

.defs {
  position: absolute;
  width: 0;
  height: 0;
}

/* Line icons, all on a 16 unit grid */
.ic {
  width: 43px;
  height: 43px;
  flex: none;
  fill: none;
  stroke: #3a3d42;
}

.ic.sm {
  width: 38px;
}

.tri {
  width: 13px;
  height: 9px;
  fill: #3c3c3c;
}

.tri.big {
  width: 20px;
  height: 14px;
  fill: #000;
}

.chev {
  width: 20px;
  height: 16px;
  flex: none;
  fill: none;
  stroke: #555;
  stroke-width: 5;
}

.grow {
  flex: 1;
}

.desktop {
  flex: 0 0 31px;
  background: linear-gradient(62deg, #3a3a3a 79%, #333 80%, #404040 81%);
}

.window {
  flex: 1;
  min-height: 0;
  display: flex;
  flex-direction: column;
  margin-right: 6px;
  background: #ebebec;
}

/* Title bar */
.header {
  position: relative;
}

.logo {
  position: absolute;
  top: 11px;
  left: 0;
  width: 103px;
  height: 113px;
  border: 2px solid #222;
  border-left: none;
  background: linear-gradient(#cfcfcf, #acacac 35%, #8c8a8c 60%, #6c6a6c);
}

.logo svg {
  width: 100%;
  height: 100%;
}

.titlebar {
  height: 77px;
  display: flex;
  align-items: flex-end;
  padding-left: 103px;
  padding-right: 19px;
}

.quick, .info {
  height: 66px;
  display: flex;
  align-items: center;
  border: 2px solid #5c5c5c;
  border-bottom: none;
  background: linear-gradient(#a9a9a9, #7f7f7f);
}

.quick {
  width: 134px;
  gap: 26px;
  padding-left: 22px;
}

.more {
  width: 20px;
  height: 16px;
}

h1 {
  flex: 1;
  align-self: flex-start;
  padding-top: 6px;
  padding-right: 9px;
  font-size: 37px;
  font-weight: 400;
  line-height: 58px;
  text-align: right;
}

.info {
  width: 1109px;
}

.play {
  width: 37px;
  padding-left: 12px;
}

.play svg {
  width: 12px;
  height: 20px;
}

.search {
  width: 480px;
  height: 56px;
  padding: 6px 6px 0;
  background: #f8f8f9;
  border: 1px solid #666;
  font-size: 29px;
  font-style: italic;
}

.search::placeholder {
  color: #666;
}

.info > button {
  margin-left: 11px;
}

.info > .play {
  margin-left: 0;
}

.info > .sign {
  flex: 1;
  display: flex;
  align-items: center;
  margin-left: 20px;
  color: #fff;
}

.sign span {
  flex: 1;
  margin-left: 11px;
  line-height: 44px;
  border-left: 3px solid #fff;
  text-align: left;
}

.info > .sign + button {
  margin-left: 24px;
}

.rule {
  width: 2px;
  height: 44px;
  margin: 0 13px 0 25px;
  background: #a4a4a4;
}

.info > .drop {
  margin: 0 12px 0 20px;
}

.winbtns {
  width: 330px;
  height: 77px;
  display: flex;
  align-items: flex-start;
  justify-content: flex-end;
}

.winbtns button {
  padding-top: 8px;
  margin-right: 46px;
}

.winbtns svg {
  width: 28px;
  height: 24px;
  fill: #222;
}

.winbtns .close {
  width: 120px;
  height: 47px;
  margin: 0 0 0 -24px;
  padding: 0 48px;
  background: #bcbcbc;
}

.close svg {
  width: 24px;
  height: 20px;
  fill: #fff;
}

/* Menu */
.menubar {
  display: flex;
  justify-content: space-between;
  height: 117px;
  margin-right: 22px;
  padding-left: 142px;
  padding-right: 12px;
  border-top: 2px solid #2a2a2a;
  background: linear-gradient(#adadad, #8a8a8a 40%, #6e6c6e 65%, #525052);
}

.menu {
  flex: 1;
  display: flex;
  flex-wrap: wrap;
  align-content: flex-start;
  column-gap: 65px;
}

.menu button {
  color: #fff;
  line-height: 56px;
  height: 58px;
}

.docbtns {
  display: flex;
  gap: 16px;
  padding-top: 12px;
}

.docbtns button {
  height: 30px;
}

.docbtns svg {
  height: 30px;
  fill: #222;
}

/* Toolbars */
.main {
  flex: 1;
  min-height: 0;
  display: flex;
  flex-direction: column;
  margin-right: 22px;
  background: #686668;
}

.toolrow {
  display: flex;
  gap: 2px;
  height: 64px;
  margin-bottom: 10px;
}

.bar {
  display: flex;
  align-items: stretch;
  border: 2px solid #333;
  background: #ededee;
}

.bar:first-child {
  border-left: none;
}

.bar:last-child {
  border-right: none;
}

.props {
  width: 327px;
}

.grip {
  flex: 0 0 22px;
  padding: 8px 5px;
  background: radial-gradient(circle, #111 1px, #8a8a8a 2px, transparent 3px) content-box 0 0 / 6px 6px, #5a585a;
}

.bar:first-child .grip {
  flex-basis: 16px;
  padding-left: 0;
}

.tool {
  width: 62px;
  display: grid;
  place-items: center;
  padding-bottom: 2px;
}

.mini {
  width: 35px;
  display: grid;
  place-items: center;
}

.sep {
  width: 15px;
  margin: 6px 0;
  background: linear-gradient(#777, #777) center / 2px 100% no-repeat;
}

.combo {
  display: flex;
  align-items: center;
  margin: 1px 0;
  border: 2px solid #aaa;
  border-right-width: 1px;
  background: linear-gradient(#f3f1f4, #e5e4e6);
}

.combo select {
  flex: 1;
  height: 100%;
  padding-bottom: 2px;
  appearance: none;
}

.combo .chev {
  margin-right: 8px;
}

.workspace {
  width: 469px;
  padding-left: 23px;
}

.indent {
  padding-left: 48px;
}

.layer {
  gap: 6px;
  padding-left: 8px;
}

.color {
  gap: 10px;
  padding-left: 14px;
}

.layer select {
  margin-left: 8px;
}

.swatch {
  width: 28px;
  height: 28px;
  border: 3px solid #000;
  background: #fff;
}

.layer .swatch {
  margin-left: 4px;
}

/* Work area */
.workarea {
  flex: 1;
  min-height: 0;
  display: flex;
  justify-content: space-between;
  gap: 11px;
  margin-top: 2px;
}

.side {
  flex: 0 0 60px;
  display: flex;
  flex-direction: column;
  overflow: hidden;
  border: 2px solid #3a3a3a;
  border-left: none;
  border-bottom: none;
  background: #ededee;
}

.side.right {
  flex-basis: 66px;
  margin-right: 8px;
  border-left: 2px solid #3a3a3a;
}

.flat {
  flex: 0 0 23px;
  padding: 5px 19px 5px 4px;
}

.right .flat {
  padding-left: 8px;
}

.tools {
  flex: 1;
  min-height: 0;
  display: grid;
  grid-template-rows: repeat(15, 20fr) 7fr;
}

.tools button {
  min-height: 0;
  overflow: hidden;
  display: flex;
  align-items: center;
  padding-left: 4px;
  padding-bottom: 2px;
}

.right .tools button {
  padding-left: 8px;
}

.tools .cut {
  align-items: flex-start;
  padding-top: 6px;
}

.frame {
  flex: 1;
  min-width: 0;
  display: grid;
  grid-template-columns: 1fr 49px;
  grid-template-rows: 1fr 46px;
  border: 2px solid #fff;
  border-top: 5px solid #8f9190;
  border-left: 5px solid #918f91;
  border-bottom-width: 3px;
  background: #f0efef;
}

.view {
  position: relative;
  background: #00104b;
}

.viewlabel {
  position: absolute;
  top: 16px;
  left: 11px;
  font-family: "Liberation Sans", Arial, sans-serif;
  font-size: 33px;
  line-height: 40px;
  color: #000519;
}

.cube {
  position: absolute;
  top: 17px;
  right: 17px;
  width: 170px;
  height: 170px;
  font-family: "Liberation Sans", Arial, sans-serif;
  font-size: 26px;
  font-weight: 700;
  text-anchor: middle;
  fill: #c3c7d0;
}

.cube .top {
  font-size: 14px;
  fill: #4a5068;
}

.wcs {
  position: absolute;
  top: 213px;
  right: 41px;
  width: 128px;
  height: 49px;
  display: flex;
  align-items: center;
  gap: 16px;
  padding: 0 10px 6px;
  border: 2px solid #c0c5da;
  border-radius: 12px;
  background: #a4abc9;
  color: #4c5068;
  font-family: "Liberation Sans", Arial, sans-serif;
  font-size: 28px;
}

.wcs svg {
  flex: none;
  width: 24px;
  height: 14px;
  fill: #b8bdd6;
  stroke: #878dad;
  stroke-width: 2;
}

.ucs {
  position: absolute;
  left: 16px;
  bottom: 14px;
  width: 200px;
  height: 204px;
  fill: none;
  stroke: #fff;
  stroke-width: 3;
}

.vscroll {
  display: flex;
  flex-direction: column;
  align-items: center;
  padding: 17px 4px 12px 0;
  border-right: 2px solid #ddd;
  border-bottom: 2px solid #999;
}

.vscroll .thumb {
  width: 41px;
  height: 47px;
  margin-top: 119px;
  margin-bottom: auto;
  background: #cbcacb;
}

/* Layout tabs */
.tabs {
  grid-column: 1 / -1;
  display: flex;
  border-top: 2px solid #888;
  border-bottom: 2px solid #ddd;
}

.nav {
  width: 40px;
  height: 40px;
  display: grid;
  place-items: center;
  border-right: 2px solid #999;
  border-bottom: 2px solid #999;
}

.nav svg {
  width: 20px;
  height: 30px;
  fill: #666;
}

.tab {
  position: relative;
  width: 163px;
  height: 42px;
  margin-left: -16px;
  font-size: 28px;
}

.tab svg {
  position: absolute;
  inset: 0;
  width: 100%;
  height: 100%;
  fill: #f4f4f4;
  stroke: #777;
  stroke-width: 3;
}

.tab span {
  position: relative;
  line-height: 42px;
}

.tab.model {
  width: 144px;
  margin-left: 4px;
  color: #f00b22;
}

.tab.model svg {
  fill: #00104b;
}

.hscroll {
  width: 664px;
  margin-left: auto;
  margin-bottom: 4px;
  display: flex;
  align-items: center;
  border-left: 2px solid #ddd;
  padding: 0 61px 0 27px;
}

.hscroll svg {
  width: 16px;
  height: 20px;
  fill: none;
  stroke: #555;
  stroke-width: 5;
}

.hscroll .thumb {
  width: 46px;
  height: 38px;
  margin-left: auto;
  margin-right: 32px;
  background: #cacaca;
}

/* Command line */
.command {
  display: flex;
  margin-top: 10px;
  background: #9c9c9e;
}

.command .flat {
  flex-basis: 34px;
  height: 22px;
  padding: 9px 4px 1px 0;
  background-color: transparent;
}

.console {
  flex: 1;
  height: 157px;
  padding: 4px 0 0 5px;
  border-radius: 6px 0 0 6px;
  background: #fff;
  font-family: "Liberation Mono", "Courier New", monospace;
  font-size: 36px;
  line-height: 44px;
}

.prompt {
  display: flex;
  margin-top: 13px;
  padding-top: 8px;
  border-top: 3px solid #999;
}

.prompt input {
  flex: 1;
}

/* Status bar */
.status {
  flex: 0 0 38px;
  display: flex;
  overflow: hidden;
  border-top: 3px solid #111;
  background: linear-gradient(#8a8a8a, #707070);
}

.coords {
  width: 473px;
  padding-left: 28px;
  font-family: "Liberation Sans", Arial, sans-serif;
  font-size: 29px;
  line-height: 60px;
}

.status button {
  flex: 0 0 59px;
  height: 66px;
  padding: 7px 0 0 6px;
  border-left: 2px solid #555;
  background: linear-gradient(#b9b8ba, #8e8d8f);
}

.status .on {
  background: linear-gradient(#dff2f7, #8fc4d6 60%);
}

.gap {
  flex: 0 0 25px;
  border-left: 2px solid #555;
  background: #858486;
}

.gap + button + button + .gap {
  flex-basis: 33px;
}

.status .thin {
  flex-basis: 16px;
}

.status .scale {
  flex-basis: 137px;
  display: flex;
  align-items: flex-start;
  gap: 8px;
  font-size: 28px;
  line-height: 36px;
}

.scale .tri {
  margin-top: 14px;
}

.status .lamp {
  flex-basis: 83px;
  padding-left: 10px;
  border-top: 3px solid #444;
  padding-top: 4px;
}

.status .slim {
  flex-basis: 29px;
  padding-left: 0;
}

.slim .ic {
  width: 26px;
}
```
